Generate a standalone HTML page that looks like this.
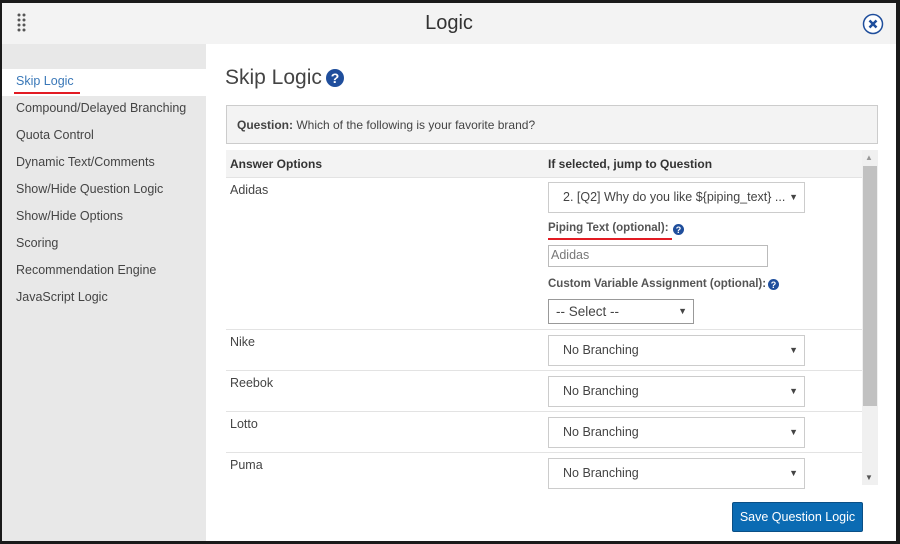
<!DOCTYPE html>
<html><head><meta charset="utf-8"><style>
*{box-sizing:border-box;margin:0;padding:0}
body{width:900px;height:544px;background:#1a1a1a;font-family:"Liberation Sans",sans-serif;position:relative;overflow:hidden;color:#444}
.win{position:absolute;left:2px;top:3px;width:894px;height:538px;background:#fff}
.hdr{position:absolute;left:0;top:0;width:894px;height:41px;background:#f3f3f3}
.hdr .t{position:absolute;left:0;width:894px;top:9px;text-align:center;font-size:20px;color:#333}
.side{position:absolute;left:0;top:41px;width:204px;height:497px;background:#e8e8e8}
.side .it{position:absolute;left:14px;font-size:12.5px;color:#444}
.sel{position:absolute;left:0;top:25px;width:204px;height:27px;background:#fff}
.abs{position:absolute}
.sb{position:absolute;background:#fff;border:1px solid #ccc;font-size:12.5px;color:#444;padding-left:14px;line-height:29px}
.sb:after{content:"▼";position:absolute;right:6px;top:0;font-size:9px;color:#444}
.line{position:absolute;left:224px;width:636px;height:1px;background:#e3e3e3}
</style></head><body>
<div class="win">
<div class="hdr">
<svg class="abs" style="left:15px;top:10px" width="10" height="20"><g fill="#555"><circle cx="2" cy="2" r="1.5"/><circle cx="7" cy="2" r="1.5"/><circle cx="2" cy="7" r="1.5"/><circle cx="7" cy="7" r="1.5"/><circle cx="2" cy="12" r="1.5"/><circle cx="7" cy="12" r="1.5"/><circle cx="2" cy="17" r="1.5"/><circle cx="7" cy="17" r="1.5"/></g></svg>
<div class="t">Logic</div>
<svg class="abs" style="left:860px;top:10px" width="22" height="22"><circle cx="11" cy="11" r="9.5" fill="#fff" stroke="#1f4e9c" stroke-width="1.5"/><path d="M7.5 7.5L14.5 14.5M14.5 7.5L7.5 14.5" stroke="#1f4e9c" stroke-width="2.5"/></svg>
</div>
<div class="side">
<div class="sel"></div>
<div class="it" style="top:30px;color:#3a78b8">Skip Logic</div>
<div class="abs" style="top:48px;left:12px;width:66px;height:2px;background:#e21b23"></div>
<div class="it" style="top:57px">Compound/Delayed Branching</div>
<div class="it" style="top:84px">Quota Control</div>
<div class="it" style="top:111px">Dynamic Text/Comments</div>
<div class="it" style="top:138px">Show/Hide Question Logic</div>
<div class="it" style="top:165px">Show/Hide Options</div>
<div class="it" style="top:192px">Scoring</div>
<div class="it" style="top:219px">Recommendation Engine</div>
<div class="it" style="top:246px">JavaScript Logic</div>
</div>
<div class="abs" style="left:223px;top:63px;font-size:21px;color:#444">Skip Logic</div>
<svg class="abs" style="left:324px;top:66px" width="18" height="18"><circle cx="9" cy="9" r="9" fill="#1f4e9c"/><text x="9" y="14" text-anchor="middle" font-size="14" font-weight="bold" fill="#fff" font-family="Liberation Sans">?</text></svg>
<div class="abs" style="left:224px;top:102px;width:652px;height:39px;background:#f3f3f3;border:1px solid #ccc;font-size:12px;padding:12px 10px"><b>Question:</b> Which of the following is your favorite brand?</div>
<div class="abs" style="left:224px;top:147px;width:636px;height:27px;background:#f3f3f3;font-size:12px;font-weight:bold;color:#333"><span class="abs" style="left:4px;top:7px">Answer Options</span><span class="abs" style="left:322px;top:7px">If selected, jump to Question</span></div>
<div class="line" style="top:174px"></div>
<div class="line" style="top:326px"></div>
<div class="line" style="top:367px"></div>
<div class="line" style="top:408px"></div>
<div class="line" style="top:449px"></div>
<div class="abs" style="left:228px;top:180px;font-size:12.5px">Adidas</div>
<div class="abs" style="left:228px;top:332px;font-size:12.5px">Nike</div>
<div class="abs" style="left:228px;top:373px;font-size:12.5px">Reebok</div>
<div class="abs" style="left:228px;top:414px;font-size:12.5px">Lotto</div>
<div class="abs" style="left:228px;top:455px;font-size:12.5px">Puma</div>
<div class="sb" style="left:546px;top:179px;width:257px;height:31px;padding-left:14px">2. [Q2] Why do you like ${piping_text} ...</div>
<div class="abs" style="left:546px;top:219px;font-size:11.5px;font-weight:bold;color:#555">Piping Text (optional):</div>
<div class="abs" style="left:546px;top:235px;width:124px;height:2px;background:#e21b23"></div>
<svg class="abs" style="left:671px;top:221px" width="11" height="11"><circle cx="5.5" cy="5.5" r="5.5" fill="#1f4e9c"/><text x="5.5" y="9" text-anchor="middle" font-size="9" font-weight="bold" fill="#fff" font-family="Liberation Sans">?</text></svg>
<div class="abs" style="left:546px;top:242px;width:220px;height:22px;border:1px solid #bbb;font-size:12.5px;color:#777;padding:2px 2px">Adidas</div>
<div class="abs" style="left:546px;top:275px;font-size:11.5px;font-weight:bold;color:#555">Custom Variable Assignment (optional):</div>
<svg class="abs" style="left:766px;top:276px" width="11" height="11"><circle cx="5.5" cy="5.5" r="5.5" fill="#1f4e9c"/><text x="5.5" y="9" text-anchor="middle" font-size="9" font-weight="bold" fill="#fff" font-family="Liberation Sans">?</text></svg>
<div class="sb" style="left:546px;top:296px;width:146px;height:25px;line-height:23px;padding-left:7px;font-size:13.5px;border:1px solid #999">-- Select --</div>
<div class="sb" style="left:546px;top:332px;width:257px;height:31px">No Branching</div>
<div class="sb" style="left:546px;top:373px;width:257px;height:31px">No Branching</div>
<div class="sb" style="left:546px;top:414px;width:257px;height:31px">No Branching</div>
<div class="sb" style="left:546px;top:455px;width:257px;height:31px">No Branching</div>
<div class="abs" style="left:860px;top:147px;width:16px;height:335px;background:#f0f0f0"></div>
<div class="abs" style="left:861px;top:163px;width:14px;height:240px;background:#c1c1c1"></div>
<div class="abs" style="left:863px;top:150px;font-size:8px;color:#999">▲</div>
<div class="abs" style="left:863px;top:470px;font-size:8px;color:#555">▼</div>
<div class="abs" style="left:730px;top:499px;width:131px;height:30px;background:#0b6bb3;border:1px solid #0a4f86;border-radius:2px;color:#fff;font-size:12.5px;text-align:center;line-height:28px">Save Question Logic</div>
</div>
</body></html>
